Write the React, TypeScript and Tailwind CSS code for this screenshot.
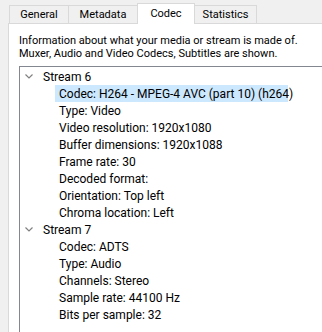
import React from "react";

const font = { fontFamily: 'Roboto, "Segoe UI", sans-serif' };

function Chevron() {
  return (
    <svg width="8" height="5" viewBox="0 0 8 5" className="block">
      <path d="M0.5 0.5 L4 4 L7.5 0.5" fill="none" stroke="#808080" strokeWidth="1.2" />
    </svg>
  );
}

const streams = [
  {
    name: "Stream 6",
    items: [
      "Codec: H264 - MPEG-4 AVC (part 10) (h264)",
      "Type: Video",
      "Video resolution: 1920x1080",
      "Buffer dimensions: 1920x1088",
      "Frame rate: 30",
      "Decoded format:",
      "Orientation: Top left",
      "Chroma location: Left",
    ],
  },
  {
    name: "Stream 7",
    items: [
      "Codec: ADTS",
      "Type: Audio",
      "Channels: Stereo",
      "Sample rate: 44100 Hz",
      "Bits per sample: 32",
    ],
  },
];

export default function App() {
  return (
    <div
      className="w-[322px] h-[332px] bg-[#f0f0f0] overflow-hidden text-[12px] text-black whitespace-nowrap"
      style={font}
    >
      <div className="flex items-end h-[23px] pl-[9px] text-[11px]">
        <div className="w-[59px] h-[18px] pt-[2px] border-l border-t border-[#d9d9d9] flex items-center justify-center">
          General
        </div>
        <div className="w-[69px] h-[18px] pt-[2px] border-l border-t border-[#d9d9d9] flex items-center justify-center">
          Metadata
        </div>
        <div className="relative z-10 w-[58px] h-[21px] -mb-px bg-white border-l border-t border-r border-[#d9d9d9] flex items-center justify-center">
          Codec
        </div>
        <div className="w-[62px] h-[18px] pt-[2px] border-t border-r border-[#d9d9d9] flex items-center justify-center">
          Statistics
        </div>
      </div>
      <div className="ml-[8px] h-[320px] bg-white border-l border-t border-[#d9d9d9] pl-[10px] pt-[11px]">
        <div className="text-[11px] leading-[12.5px]">
          <div>Information about what your media or stream is made of.</div>
          <div>Muxer, Audio and Video Codecs, Subtitles are shown.</div>
        </div>
        <div className="mt-[6px] h-[300px] border-l border-t border-[#828790] pt-px">
          {streams.map((s) => (
            <div key={s.name}>
              <div className="h-[17px] flex items-center">
                <div className="w-[23px] pl-[5px]">
                  <Chevron />
                </div>
                <span>{s.name}</span>
              </div>
              {s.items.map((it, i) => (
                <div key={it} className="h-[17px] flex items-center pl-[39px]">
                  <span
                    className={
                      s.name === "Stream 6" && i === 0
                        ? "bg-[#cce8ff] h-[17px] flex items-center pl-[4px] -ml-[4px] w-[233px]"
                        : ""
                    }
                  >
                    {it}
                  </span>
                </div>
              ))}
            </div>
          ))}
        </div>
      </div>
    </div>
  );
}
